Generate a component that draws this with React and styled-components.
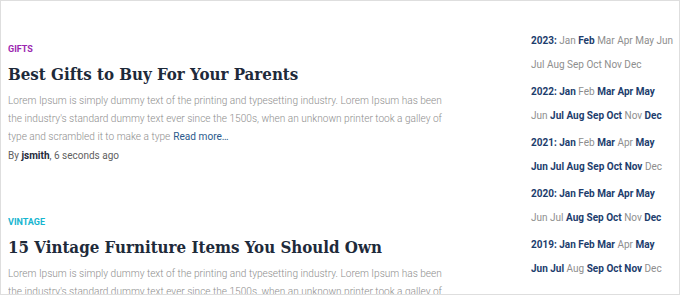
import React from "react";
import styled, { createGlobalStyle } from "styled-components";

const GlobalStyle = createGlobalStyle`
  html, body {
    margin: 0;
    padding: 0;
    background: #fff;
  }
  body {
    font-family: Roboto, "Liberation Sans", sans-serif;
  }
`;

const excerpt = [
  "Lorem Ipsum is simply dummy text of the printing and typesetting industry. Lorem Ipsum has been",
  "the industry's standard dummy text ever since the 1500s, when an unknown printer took a galley of",
  "type and scrambled it to make a type",
];

const posts = [
  {
    category: "GIFTS",
    color: "#9c27b0",
    title: "Best Gifts to Buy For Your Parents",
    lines: excerpt,
    author: "jsmith",
    time: "6 seconds ago",
  },
  {
    category: "VINTAGE",
    color: "#17b5cf",
    title: "15 Vintage Furniture Items You Should Own",
    lines: excerpt,
    author: "jsmith",
    time: "6 seconds ago",
  },
];

// months with posts are bold, split into the two rows shown per year
const archives = [
  { year: 2023, rows: [["Jan", 0], ["Feb", 1], ["Mar", 0], ["Apr", 0], ["May", 0], ["Jun", 0]], rest: [["Jul", 0], ["Aug", 0], ["Sep", 0], ["Oct", 0], ["Nov", 0], ["Dec", 0]] },
  { year: 2022, rows: [["Jan", 1], ["Feb", 0], ["Mar", 1], ["Apr", 1], ["May", 1]], rest: [["Jun", 0], ["Jul", 1], ["Aug", 1], ["Sep", 1], ["Oct", 1], ["Nov", 0], ["Dec", 1]] },
  { year: 2021, rows: [["Jan", 1], ["Feb", 0], ["Mar", 1], ["Apr", 0], ["May", 1]], rest: [["Jun", 1], ["Jul", 1], ["Aug", 1], ["Sep", 1], ["Oct", 1], ["Nov", 1], ["Dec", 0]] },
  { year: 2020, rows: [["Jan", 1], ["Feb", 1], ["Mar", 1], ["Apr", 1], ["May", 1]], rest: [["Jun", 0], ["Jul", 0], ["Aug", 1], ["Sep", 1], ["Oct", 1], ["Nov", 0], ["Dec", 1]] },
  { year: 2019, rows: [["Jan", 1], ["Feb", 1], ["Mar", 1], ["Apr", 0], ["May", 1]], rest: [["Jun", 1], ["Jul", 1], ["Aug", 0], ["Sep", 1], ["Oct", 1], ["Nov", 1], ["Dec", 0]] },
];

function Months({ items }) {
  return items.map(([m, on], i) => (
    <React.Fragment key={m}>
      {i > 0 && " "}
      <Month $on={on}>{m}</Month>
    </React.Fragment>
  ));
}

export default function App() {
  return (
    <>
      <GlobalStyle />
      <Frame>
        <Main>
          {posts.map((p) => (
            <Post key={p.title}>
              <Category $color={p.color}>{p.category}</Category>
              <Title>{p.title}</Title>
              <Excerpt>
                {p.lines.map((l, i) => (
                  <Line key={i}>
                    {l}
                    {i === p.lines.length - 1 && <ReadMore href="#">Read more…</ReadMore>}
                  </Line>
                ))}
              </Excerpt>
              <Meta>
                By <Author>{p.author}</Author>, {p.time}
              </Meta>
            </Post>
          ))}
        </Main>
        <Sidebar>
          {archives.map((a) => (
            <YearBlock key={a.year}>
              <ArchiveLine>
                <Year>{a.year}:</Year> <Months items={a.rows} />
              </ArchiveLine>
              <ArchiveLine>
                <Months items={a.rest} />
              </ArchiveLine>
            </YearBlock>
          ))}
        </Sidebar>
      </Frame>
    </>
  );
}

const Frame = styled.div`
  box-sizing: border-box;
  width: 680px;
  height: 295px;
  border: 1px solid #dedede;
  overflow: hidden;
  display: flex;
  padding-left: 7px;
`;
const Main = styled.div`
  width: 435px;
  flex-shrink: 0;
  overflow: hidden;
  padding-top: 42px;
`;
const Post = styled.article`
  margin-bottom: 51px;
`;
const Category = styled.div`
  font-size: 9px;
  line-height: 12px;
  font-weight: 700;
  color: ${(p) => p.$color};
`;
const Title = styled.h2`
  margin: 6px 0 0;
  font-family: "DejaVu Serif", "Liberation Serif", serif;
  font-stretch: condensed;
  font-size: 16.8px;
  line-height: 26px;
  font-weight: 700;
  color: #1e2a3a;
  white-space: nowrap;
`;
const Excerpt = styled.div`
  margin-top: 5px;
  font-size: 10.1px;
  font-weight: 300;
  line-height: 18px;
  color: #8e8e8e;
`;
const Line = styled.div`
  white-space: nowrap;
`;
const ReadMore = styled.a`
  margin-left: 3px;
  font-weight: 400;
  color: #2b5a8c;
  text-decoration: none;
`;
const Meta = styled.div`
  margin-top: 1px;
  font-size: 10px;
  line-height: 18px;
  color: #5f5f5f;
`;
const Author = styled.b`
  color: #1e2a3a;
`;
const Sidebar = styled.aside`
  margin-left: 88px;
  padding-top: 28px;
`;
const YearBlock = styled.div`
  margin-bottom: 3px;
`;
const ArchiveLine = styled.div`
  font-size: 10px;
  line-height: 24px;
  white-space: nowrap;
`;
const Year = styled.b`
  color: #1d3d6d;
`;
const Month = styled.span`
  font-weight: ${(p) => (p.$on ? 700 : 400)};
  color: ${(p) => (p.$on ? "#1d3d6d" : "#8e8e8e")};
`;
